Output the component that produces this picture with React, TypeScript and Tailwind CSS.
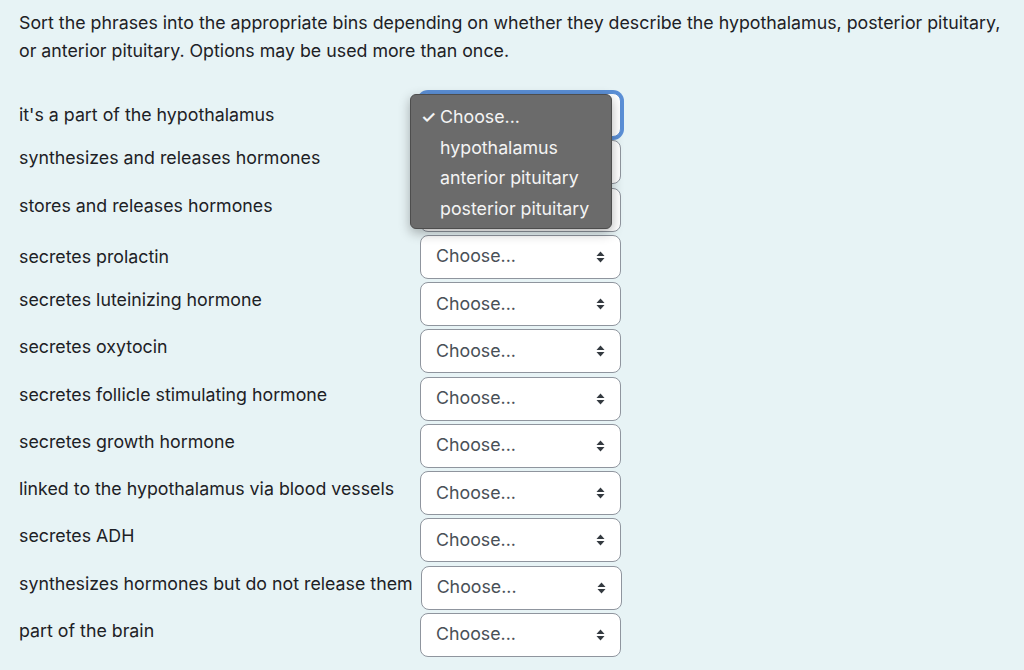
const rows = [
  "it's a part of the hypothalamus",
  'synthesizes and releases hormones',
  'stores and releases hormones',
  'secretes prolactin',
  'secretes luteinizing hormone',
  'secretes oxytocin',
  'secretes follicle stimulating hormone',
  'secretes growth hormone',
  'linked to the hypothalamus via blood vessels',
  'secretes ADH',
  'synthesizes hormones but do not release them',
  'part of the brain',
]

const options = ['hypothalamus', 'anterior pituitary', 'posterior pituitary']

function Arrows() {
  return (
    <svg width="9" height="12" viewBox="0 0 9 12" className="text-[#343a40]">
      <path d="M4.5 0.5 L8.5 5 H0.5 Z" fill="currentColor" />
      <path d="M4.5 11.5 L8.5 7 H0.5 Z" fill="currentColor" />
    </svg>
  )
}

function SelectBox({ focused }: { focused?: boolean }) {
  return (
    <div
      className={`w-[201px] h-[44px] shrink-0 rounded-[8px] border bg-white flex items-center justify-between pl-[15px] pr-[15px] ${
        focused ? 'border-[#5b8fd6] ring-[3px] ring-[#5b8fd6]' : 'border-[#8f959e]'
      }`}
    >
      <span className="text-[#495057]">Choose...</span>
      <Arrows />
    </div>
  )
}

export default function App() {
  return (
    <div
      className="min-h-screen bg-[#e7f3f5] text-[#1d2125] text-[17.8px] px-[19px] pt-[9px]"
      style={{ fontFamily: 'Inter, "Liberation Sans", sans-serif' }}
    >
      <p className="leading-[28px]">
        Sort the phrases into the appropriate bins depending on whether they describe the hypothalamus, posterior
        pituitary, or anterior pituitary. Options may be used more than once.
      </p>

      <div className="mt-[28px] flex flex-col gap-[3.25px]">
        {rows.map((label, i) => (
          <div key={i} className="relative flex items-start">
            <div
              className={`min-w-[393px] mr-[8px] leading-[20px] ${i === 0 || i === 3 ? 'pt-[12px]' : 'pt-[8px]'}`}
            >
              {label}
            </div>
            <SelectBox focused={i === 0} />
            {i === 0 && (
              <div className="absolute left-[391px] top-[1px] z-10 w-[202px] rounded-[6px] border border-[#4d4d4d] bg-[#6b6b6b] pt-[7px] pb-[3px] shadow-[0_4px_12px_rgba(0,0,0,0.3)] text-[#f4f4f4]">
                <div className="h-[30.7px] flex items-center">
                  <span className="w-[29px] pl-[10px] text-[17px] font-semibold leading-none">✓</span>
                  <span>Choose...</span>
                </div>
                {options.map((o) => (
                  <div key={o} className="h-[30.7px] flex items-center pl-[29px]">
                    {o}
                  </div>
                ))}
              </div>
            )}
          </div>
        ))}
      </div>
    </div>
  )
}
